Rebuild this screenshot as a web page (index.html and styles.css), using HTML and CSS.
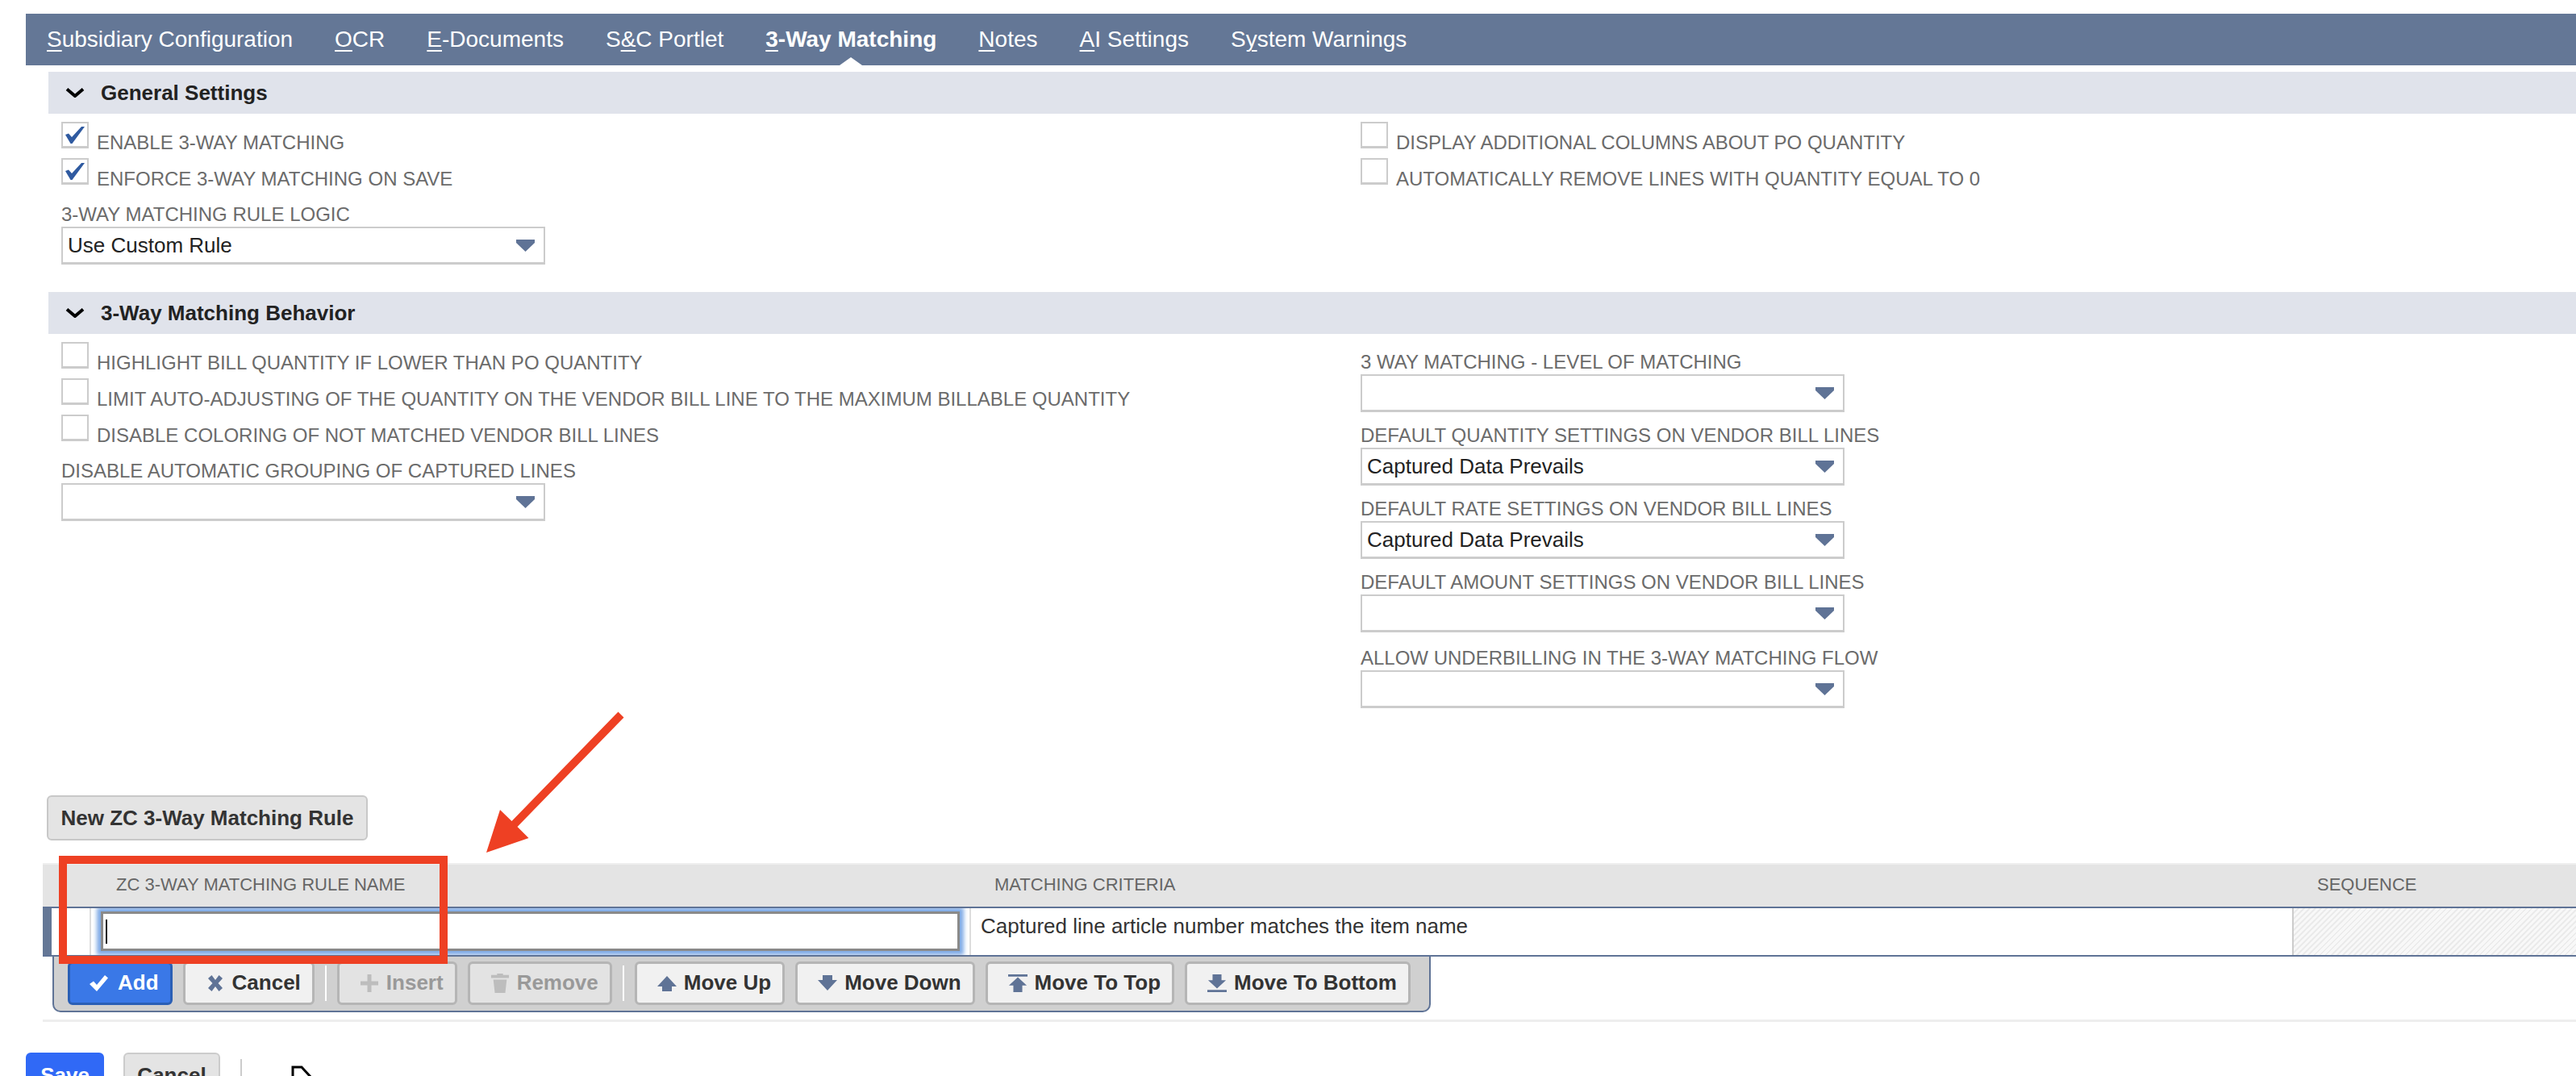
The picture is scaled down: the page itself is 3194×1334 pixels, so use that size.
FILE: index.html
```html
<!DOCTYPE html>
<html lang="en">
<head>
<meta charset="utf-8">
<title>3-Way Matching</title>
<link rel="stylesheet" href="styles.css">
</head>
<body>
<nav class="tabs">
  <a class="tab"><u>S</u>ubsidiary Configuration</a>
  <a class="tab"><u>O</u>CR</a>
  <a class="tab"><u>E</u>-Documents</a>
  <a class="tab">S<u>&amp;</u>C Portlet</a>
  <a class="tab tab-active"><u>3</u>-Way Matching</a>
  <a class="tab"><u>N</u>otes</a>
  <a class="tab"><u>A</u>I Settings</a>
  <a class="tab">S<u>y</u>stem Warnings</a>
</nav>

<section class="section">
  <h2 class="section-head"><svg class="chevron" viewBox="0 0 24 12"><path d="M2 1.500L12 10L22 1.500"/></svg>General Settings</h2>
  <div class="columns">
    <div class="col">
      <div class="check-row"><span class="checkbox"><svg viewBox="0 0 24 21"><path d="M0 10L4 8.500L8 13L20 0H24L8.500 21H6.500Z"/></svg></span><label class="label">ENABLE 3-WAY MATCHING</label></div>
      <div class="check-row"><span class="checkbox"><svg viewBox="0 0 24 21"><path d="M0 10L4 8.500L8 13L20 0H24L8.500 21H6.500Z"/></svg></span><label class="label">ENFORCE 3-WAY MATCHING ON SAVE</label></div>
      <div class="field field-after-checks">
        <label class="label">3-WAY MATCHING RULE LOGIC</label>
        <div class="select">Use Custom Rule<svg class="caret-down" viewBox="0 0 23 15"><path d="M0 0H23V4L11.500 15L0 4Z"/></svg></div>
      </div>
    </div>
    <div class="col">
      <div class="check-row"><span class="checkbox"></span><label class="label">DISPLAY ADDITIONAL COLUMNS ABOUT PO QUANTITY</label></div>
      <div class="check-row"><span class="checkbox"></span><label class="label">AUTOMATICALLY REMOVE LINES WITH QUANTITY EQUAL TO 0</label></div>
    </div>
  </div>
</section>

<section class="section">
  <h2 class="section-head"><svg class="chevron" viewBox="0 0 24 12"><path d="M2 1.500L12 10L22 1.500"/></svg>3-Way Matching Behavior</h2>
  <div class="columns">
    <div class="col">
      <div class="check-row"><span class="checkbox"></span><label class="label">HIGHLIGHT BILL QUANTITY IF LOWER THAN PO QUANTITY</label></div>
      <div class="check-row"><span class="checkbox"></span><label class="label">LIMIT AUTO-ADJUSTING OF THE QUANTITY ON THE VENDOR BILL LINE TO THE MAXIMUM BILLABLE QUANTITY</label></div>
      <div class="check-row"><span class="checkbox"></span><label class="label">DISABLE COLORING OF NOT MATCHED VENDOR BILL LINES</label></div>
      <div class="field field-after-checks">
        <label class="label">DISABLE AUTOMATIC GROUPING OF CAPTURED LINES</label>
        <div class="select"><span></span><svg class="caret-down" viewBox="0 0 23 15"><path d="M0 0H23V4L11.500 15L0 4Z"/></svg></div>
      </div>
    </div>
    <div class="col col-fields">
      <div class="field">
        <label class="label">3 WAY MATCHING - LEVEL OF MATCHING</label>
        <div class="select"><span></span><svg class="caret-down" viewBox="0 0 23 15"><path d="M0 0H23V4L11.500 15L0 4Z"/></svg></div>
      </div>
      <div class="field">
        <label class="label">DEFAULT QUANTITY SETTINGS ON VENDOR BILL LINES</label>
        <div class="select">Captured Data Prevails<svg class="caret-down" viewBox="0 0 23 15"><path d="M0 0H23V4L11.500 15L0 4Z"/></svg></div>
      </div>
      <div class="field">
        <label class="label">DEFAULT RATE SETTINGS ON VENDOR BILL LINES</label>
        <div class="select">Captured Data Prevails<svg class="caret-down" viewBox="0 0 23 15"><path d="M0 0H23V4L11.500 15L0 4Z"/></svg></div>
      </div>
      <div class="field">
        <label class="label">DEFAULT AMOUNT SETTINGS ON VENDOR BILL LINES</label>
        <div class="select"><span></span><svg class="caret-down" viewBox="0 0 23 15"><path d="M0 0H23V4L11.500 15L0 4Z"/></svg></div>
      </div>
      <div class="field field-last">
        <label class="label">ALLOW UNDERBILLING IN THE 3-WAY MATCHING FLOW</label>
        <div class="select"><span></span><svg class="caret-down" viewBox="0 0 23 15"><path d="M0 0H23V4L11.500 15L0 4Z"/></svg></div>
      </div>
    </div>
  </div>
</section>

<div class="new-row"><button class="btn-new">New ZC 3-Way Matching Rule</button></div>

<div class="sublist">
  <div class="grid-row head-row">
    <span></span><span></span>
    <div class="head-cell">ZC 3-WAY MATCHING RULE NAME</div>
    <div class="head-cell">MATCHING CRITERIA</div>
    <div class="head-cell">SEQUENCE</div>
  </div>
  <div class="grid-row edit-row">
    <span class="row-strip"></span>
    <span class="row-handle"></span>
    <div class="input-cell"><div class="text-field"><span class="text-caret"></span></div></div>
    <div class="text-cell">Captured line article number matches the item name</div>
    <div class="hatch-cell"></div>
  </div>
  <div class="toolbar">
    <button class="tool tool-primary"><svg viewBox="0 0 24 22"><path d="M1 12L6 8.500L10 13L20 1L24 4.500L10 21Z" fill="#fff"/></svg>Add</button>
    <button class="tool"><svg viewBox="0 0 24 24"><path d="M3 6L7.500 2L12 8L16.500 2L21 6L15.500 12L21 18L16.500 22L12 16L7.500 22L3 18L8.500 12Z" class="ico"/></svg>Cancel</button>
    <span class="tool-sep"></span>
    <button class="tool tool-off"><svg viewBox="0 0 24 24"><path d="M9.500 1H14.500V9.500H23V14.500H14.500V23H9.500V14.500H1V9.500H9.500Z" class="ico-off"/></svg>Insert</button>
    <button class="tool tool-off"><svg viewBox="0 0 24 26"><path d="M8 0H16V2H24V6H0V2H8ZM3 8H21L19 26H5Z" class="ico-off"/></svg>Remove</button>
    <span class="tool-sep"></span>
    <button class="tool"><svg viewBox="0 0 24 20"><path d="M12 1L24 14H18V20H6V14H0Z" class="ico"/></svg>Move Up</button>
    <button class="tool"><svg viewBox="0 0 24 20"><path d="M6 0H18V6H24L12 19L0 6H6Z" class="ico"/></svg>Move Down</button>
    <button class="tool"><svg viewBox="0 0 26 24"><path d="M0 0H26V3H0ZM13 4L25 15H19V24H7V15H1Z" class="ico"/></svg>Move To Top</button>
    <button class="tool"><svg viewBox="0 0 26 24"><path d="M7 0H19V8H25L13 19L1 8H7ZM0 21H26V24H0Z" class="ico"/></svg>Move To Bottom</button>
  </div>
</div>

<footer class="footer">
  <button class="btn-save">Save</button>
  <button class="btn-cancel">Cancel</button>
  <span class="footer-sep"></span>
  <svg class="doc-icon" viewBox="0 0 26 34"><path d="M2 30V2H13L24 14V30"/></svg>
</footer>

<div class="callout-box"></div>
<svg class="callout-arrow" viewBox="0 0 3194 1334"><path d="M603 1057L620 1004L634.500 1018L766.500 882.500L773.500 889.500L641.500 1025L655.500 1039Z"/></svg>
</body>
</html>
```

FILE: styles.css
```css
* { box-sizing: border-box; }
html, body { margin: 0; height: 1334px; overflow: hidden; background: #fff; }
body { position: relative; font-family: "Liberation Sans", Arial, sans-serif; color: #222; padding-top: 17px; }
svg { display: block; flex: none; }
button { font-family: inherit; }

.tabs { display: flex; height: 64px; margin-left: 32px; padding-left: 0; background: #647796; align-items: center; }
.tab { position: relative; padding: 0 26px; color: #fff; font-size: 28px; line-height: 36px; white-space: nowrap; }
.tab u { text-underline-offset: 4px; text-decoration-thickness: 2px; }
.tab-active { font-weight: 700; }
.tab-active::after { content: ""; position: absolute; left: 50%; bottom: -14px; margin-left: -14px; border: 14px solid transparent; border-top: 0; border-bottom: 10px solid #fff; }

.section { margin-left: 60px; margin-top: 8px; }
.section + .section { margin-top: 34px; }
.section-head { display: flex; align-items: center; height: 52px; margin: 0; padding-left: 21px; background: #e0e3eb; color: #222; font-size: 26px; font-weight: 700; }
.chevron { width: 24px; height: 12px; margin-right: 20px; }
.chevron path { fill: none; stroke: #000; stroke-width: 4; }

.columns { display: grid; grid-template-columns: 1611px 1fr; padding: 10px 0 0 16px; }
.col-fields { padding-top: 11px; }
.check-row { display: flex; height: 45px; }
.checkbox { display: flex; align-items: center; justify-content: center; flex: none; width: 34px; height: 33px; border: 2px solid #ccc; border-bottom-width: 3px; background: #fff; }
.checkbox svg { width: 24px; height: 21px; fill: #2f5aa0; }
.check-row .label { margin: 12px 0 0 10px; }
.label { display: block; color: #6b6b6b; font-size: 24px; line-height: 28px; white-space: nowrap; }

.field { margin-bottom: 15px; }
.field-last { margin-top: 18px; margin-bottom: 0; }
.field-after-checks { margin-top: 11px; margin-bottom: 0; }
.select { display: flex; align-items: center; justify-content: space-between; width: 600px; height: 47px; margin-top: 1px; padding: 0 11px 0 6px; border: 2px solid #ccc; border-bottom-width: 3px; background: #fff; color: #222; font-size: 26px; }
.caret-down { width: 23px; height: 15px; fill: #5f7396; }

.new-row { margin: 108px 0 0 58px; }
.btn-new { display: block; width: 398px; height: 56px; padding: 0; border: 2px solid #c8c8c8; border-radius: 6px; background: #e4e4e4; color: #333; font-size: 26px; font-weight: 700; }

.sublist { margin: 28px 0 0 53px; height: 197px; border-top: 2px solid #eee; border-bottom: 3px solid #eee; }
.grid-row { display: grid; grid-template-columns: 11px 49px 1089px 1640px 1fr; }
.head-row { height: 52px; background: #e4e4e4; }
.head-cell { padding-left: 31px; color: #666; font-size: 22px; line-height: 50px; white-space: nowrap; }
.edit-row { height: 62px; border-top: 2px solid #5f7396; border-bottom: 2px solid #5f7396; }
.row-strip { background: #647796; }
.row-handle { border-right: 2px solid #ddd; }
.input-cell { overflow: hidden; padding: 4px 12px 5px 12px; background: #fff; }
.text-field { display: flex; align-items: center; height: 100%; padding-left: 3px; border: 3px solid #8a8a8a; background: #fff; box-shadow: 0 0 5px 5px #7fabe6; }
.text-caret { width: 2px; height: 30px; background: #111; }
.text-cell { padding: 7px 0 0 12px; border-left: 2px solid #ddd; color: #333; font-size: 26px; line-height: 30px; white-space: nowrap; }
.hatch-cell { border-left: 2px solid #ccc; background: repeating-linear-gradient(135deg, #f8f8f8 0 3px, #ebebeb 3px 5px); }

.toolbar { display: flex; align-items: center; gap: 13px; width: 1709px; height: 69px; margin-left: 12px; padding: 0 0 2px 17px; border: 2px solid #5f7396; border-top: 0; border-radius: 0 0 10px 10px; background: #d0d0d0; }
.tool { display: flex; align-items: center; gap: 9px; height: 54px; padding: 0 14px 0 25px; border: 3px solid #b5b5b5; border-radius: 6px; background: #f1f1f1; color: #333; font-size: 26px; font-weight: 700; white-space: nowrap; }
.tool svg { width: 24px; height: 24px; }
.ico { fill: #5f7396; }
.ico-off { fill: #bdbdbd; }
.tool-primary { gap: 12px; padding-left: 23px; background: #3a78e7; border-color: #2a5fb5; color: #fff; }
.tool-off { background: #e3e3e3; color: #999; }
.tool-sep { width: 2px; height: 44px; background: #fff; }

.footer { display: flex; align-items: flex-start; margin: 38px 0 0 32px; }
.btn-save { width: 97px; height: 56px; padding: 0; border: 0; border-radius: 6px; background: #3069f6; color: #fff; font-size: 26px; font-weight: 700; }
.btn-cancel { width: 120px; height: 56px; margin-left: 24px; padding: 0; border: 2px solid #ccc; border-radius: 6px; background: #e4e4e4; color: #333; font-size: 26px; font-weight: 700; }
.footer-sep { width: 2px; height: 40px; margin: 8px 0 0 25px; background: #ccc; }
.doc-icon { width: 26px; height: 34px; margin: 16px 0 0 61px; }
.doc-icon path { fill: none; stroke: #000; stroke-width: 3; }

.callout-box { position: absolute; left: 73px; top: 1061px; width: 482px; height: 134px; border: 10px solid #ee4023; }
.callout-arrow { position: absolute; left: 0; top: 0; width: 3194px; height: 1334px; fill: #ee4023; pointer-events: none; }
```
